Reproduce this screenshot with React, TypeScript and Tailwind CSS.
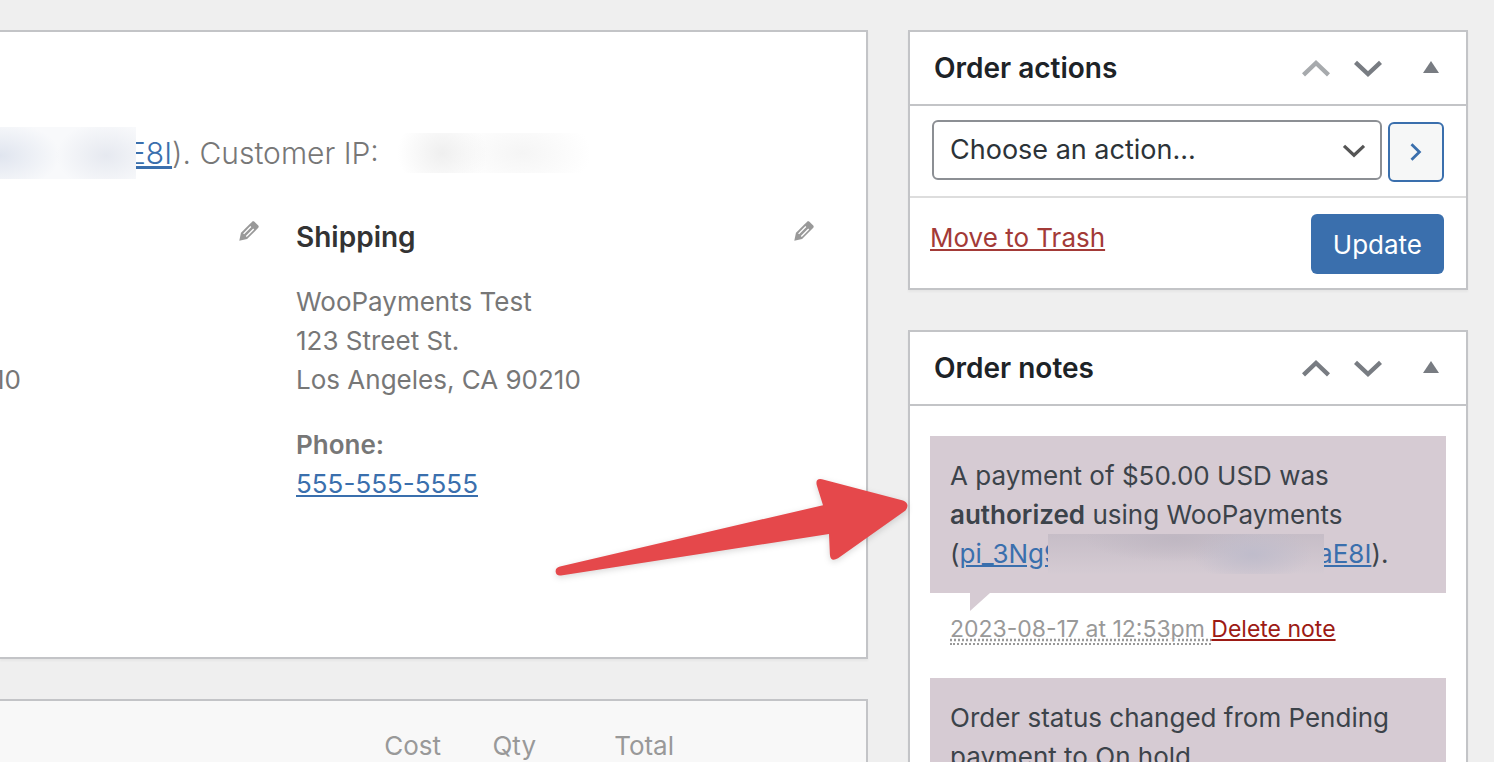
import React, { useState } from 'react';

type ChevronProps = {
  direction: 'up' | 'down';
};

const Chevron = ({ direction }: ChevronProps) => (
  <svg className="w-7 h-[18px]" viewBox="0 0 28 18" fill="none" stroke="currentColor" strokeWidth="4.4" aria-hidden="true">
    <path d={direction === 'up' ? 'M1.500 15.800L14 4L26.500 15.800' : 'M1.500 3.400L14 15L26.500 3.400'} />
  </svg>
);

const EditButton = ({ label }: { label: string }) => (
  <button type="button" aria-label={label} className="h-7 -mr-px text-[#999]">
    <svg className="w-7 h-7" viewBox="0 0 20 20" fill="currentColor" aria-hidden="true">
      <path d="M13.89 3.39l2.71 2.72c.46.46.42 1.24.03 1.64l-8.01 8.02-5.56 1.16 1.16-5.58s7.6-7.63 7.99-8.03c.39-.39 1.22-.39 1.68.07zM11 6.5l-5.200 5.200.7.7 5.200-5.250zM8.400 14.200l5.300-5.300-.7-.7-5.300 5.300z" />
    </svg>
  </button>
);

type PanelProps = {
  title: string;
  first?: boolean;
  children: React.ReactNode;
};

const Panel = ({ title, first = false, children }: PanelProps) => (
  <section className="bg-white border-2 border-[#c3c4c7] shadow-[0_2px_2px_rgba(0,0,0,0.04)]">
    <header className="flex items-center justify-between h-[74px] pl-6 pr-[27px] border-b-2 border-[#c3c4c7]">
      <h2 className="text-[28px] leading-9 font-semibold text-[#1d2327]">{title}</h2>
      <div className="flex items-center text-[#787c82]">
        <button type="button" aria-label={`Move ${title} up`} disabled={first} className="mr-6 disabled:text-[#a7aaad]">
          <Chevron direction="up" />
        </button>
        <button type="button" aria-label={`Move ${title} down`} className="mr-[41px]">
          <Chevron direction="down" />
        </button>
        <button type="button" aria-label={`Toggle ${title}`}>
          <svg className="w-4 h-4" viewBox="0 0 16 16" fill="currentColor" aria-hidden="true">
            <path d="M8 1L16 13H0z" />
          </svg>
        </button>
      </div>
    </header>
    {children}
  </section>
);

const OrderActions = () => {
  const [action, setAction] = useState('');

  return (
    <Panel title="Order actions" first>
      <div className="flex gap-1.5 py-3.5 px-[22px] border-b-2 border-[#ddd]">
        <div className="relative flex-1 h-[60px]">
          <select
            aria-label="Order action"
            value={action}
            onChange={(e) => setAction(e.target.value)}
            className="appearance-none w-full h-full pl-4 pr-12 bg-white border-2 border-[#8c8f94] rounded-md text-[27px] text-[#2c3338]"
          >
            <option value="">Choose an action...</option>
          </select>
          <svg
            className="absolute right-4 top-6 w-6 h-4 text-[#555] pointer-events-none"
            viewBox="0 0 24 16"
            fill="none"
            stroke="currentColor"
            strokeWidth="3.2"
            aria-hidden="true"
          >
            <path d="M2 1.8L12 11.2L22 1.8" />
          </svg>
        </div>
        <button
          type="button"
          aria-label="Apply action"
          className="flex items-center justify-center w-14 h-[60px] mt-0.5 bg-[#f6f7f7] border-2 border-[#3a6fad] rounded-md text-[#3a6fad]"
        >
          <svg className="w-3 h-5" viewBox="0 0 12 20" fill="none" stroke="currentColor" strokeWidth="2.8" aria-hidden="true">
            <path d="M1.500 2.200L9.400 10L1.500 17.800" />
          </svg>
        </button>
      </div>
      <div className="flex items-start justify-between pt-4 pb-3.5 pl-5 pr-[22px]">
        <a href="#trash" className="mt-1 text-[26px] leading-10 text-[#a33a37] underline">
          Move to Trash
        </a>
        <button type="button" className="h-[60px] px-[22px] rounded-md bg-[#3a6fad] text-[26px] text-white">
          Update
        </button>
      </div>
    </Panel>
  );
};

const OrderNotes = () => (
  <Panel title="Order notes">
    <ul className="px-5 pt-[30px]">
      <li>
        <div className="relative p-5 bg-[#d6cbd3] text-[26px] leading-[39px] text-[#3c434a]">
          <p>
            A payment of $50.00 USD was
            <br />
            <strong className="font-semibold">authorized</strong> using WooPayments
          </p>
          <p className="flex h-[39px]">
            (
            <a href="#payment" className="flex text-[#3a6fad] underline">
              <span>pi_3Ng9</span>
              <span className="relative w-[276px] h-10 -ml-3 -mr-1.5 bg-[#cbc2cd] bg-[radial-gradient(ellipse_60px_28px_at_74%_50%,#bfbccb,transparent),radial-gradient(ellipse_90px_24px_at_46%_10%,#bfb7c2,transparent),linear-gradient(to_bottom,#c6bdc7,#d5cbd3)]"></span>
              <span>aE8I</span>
            </a>
            ).
          </p>
          <svg className="absolute left-10 top-full w-5 h-[18px] text-[#d6cbd3]" viewBox="0 0 20 18" fill="currentColor" aria-hidden="true">
            <path d="M0 0H20L0 18z" />
          </svg>
        </div>
        <p className="pt-5 pb-8 pl-5 text-[23px] leading-[33px] text-[#999]">
          <abbr title="2023-08-17 12:53:00" className="border-b-2 border-dotted border-[#999] underline decoration-dotted whitespace-pre">
            {'2023-08-17 at 12:53pm '}
          </abbr>
          <a href="#delete" className="text-[#9c1a14] underline">
            Delete note
          </a>
        </p>
      </li>
      <li className="p-5 bg-[#d6cbd3] text-[26px] leading-[39px] text-[#3c434a]">
        Order status changed from Pending
        <br />
        payment to On hold.
      </li>
    </ul>
  </Panel>
);

const OrderDetails = () => (
  <section className="pt-[95px] pb-[154px] bg-white border-2 border-l-0 border-[#c3c4c7] shadow-[0_2px_2px_rgba(0,0,0,0.04)] text-[#777]">
    <div className="flex items-center h-[52px] text-[30px] font-light whitespace-nowrap">
      <span className="relative w-[136px] h-[52px] -mr-2 shrink-0 bg-[#f8f9fb] bg-[radial-gradient(ellipse_50px_34px_at_78%_55%,#e6e9f0,transparent),radial-gradient(ellipse_60px_34px_at_0%_55%,#e0e5ef,transparent)]"></span>
      <a href="#transaction" className="text-[#3a6fad] underline">
        E8I
      </a>
      <span>). Customer IP:</span>
      <span className="w-[198px] h-10 ml-3 shrink-0 bg-[radial-gradient(ellipse_45px_40px_at_26%_50%,#efefef,transparent),radial-gradient(ellipse_70px_40px_at_66%_50%,#f5f5f5,transparent)]"></span>
    </div>

    <div className="flex pt-[38px] pr-[49px] text-[26px] leading-[39px]">
      <div className="w-[262px] mr-[34px] shrink-0">
        <div className="flex justify-end h-[41px] mb-6">
          <EditButton label="Edit billing address" />
        </div>
        <p className="flex justify-end w-[21px] pt-[78px]">10</p>
      </div>
      <div className="flex-1">
        <div className="flex justify-between h-[41px] mb-6">
          <h3 className="text-[28px] leading-[41px] font-semibold text-[#333]">Shipping</h3>
          <EditButton label="Edit shipping address" />
        </div>
        <address className="not-italic">
          WooPayments Test
          <br />
          123 Street St.
          <br />
          Los Angeles, CA 90210
        </address>
        <p className="mt-[26px]">
          <strong className="block font-semibold">Phone:</strong>
          <a href="tel:555-555-5555" className="text-[#3a6fad] underline">
            555-555-5555
          </a>
        </p>
      </div>
    </div>
  </section>
);

const OrderItems = () => (
  <section className="mt-10 bg-[#f8f8f8] border-2 border-l-0 border-[#c3c4c7]">
    <table className="w-full text-[26px] leading-[39px] text-[#999]">
      <thead>
        <tr className="text-right">
          <th className="py-[25px] font-normal">Cost</th>
          <th className="w-[95px] font-normal">Qty</th>
          <th className="w-[138px] font-normal">Total</th>
          <td className="w-[192px]"></td>
        </tr>
      </thead>
    </table>
  </section>
);

// Callout pointing at the payment note, tip ends at the panel's left edge
const CalloutArrow = () => (
  <svg
    className="absolute right-full top-[140px] w-[360px] h-[120px] pointer-events-none drop-shadow-[0_2px_3px_rgba(0,0,0,0.15)]"
    viewBox="0 0 360 120"
    fill="#e5484b"
    aria-hidden="true"
  >
    <path d="M12 96.400L275 35.200L268.700 15Q267.200 8 274 9.200L355 30.500Q362.500 34 357.500 40.500L290 88.300Q282.500 92.500 281.900 84.500L281 64L13 105.400Q8 106 7.600 101.500Q7.500 97.300 12 96.400Z" />
  </svg>
);

export default function App() {
  return (
    <div className="flex gap-10 h-screen pt-[30px] pr-[26px] overflow-hidden bg-[#efefef] font-[Inter,'Liberation_Sans',sans-serif]">
      <main className="flex-1 min-w-0">
        <OrderDetails />
        <OrderItems />
      </main>
      <aside className="w-[560px] shrink-0">
        <OrderActions />
        <div className="relative mt-10">
          <OrderNotes />
          <CalloutArrow />
        </div>
      </aside>
    </div>
  );
}
